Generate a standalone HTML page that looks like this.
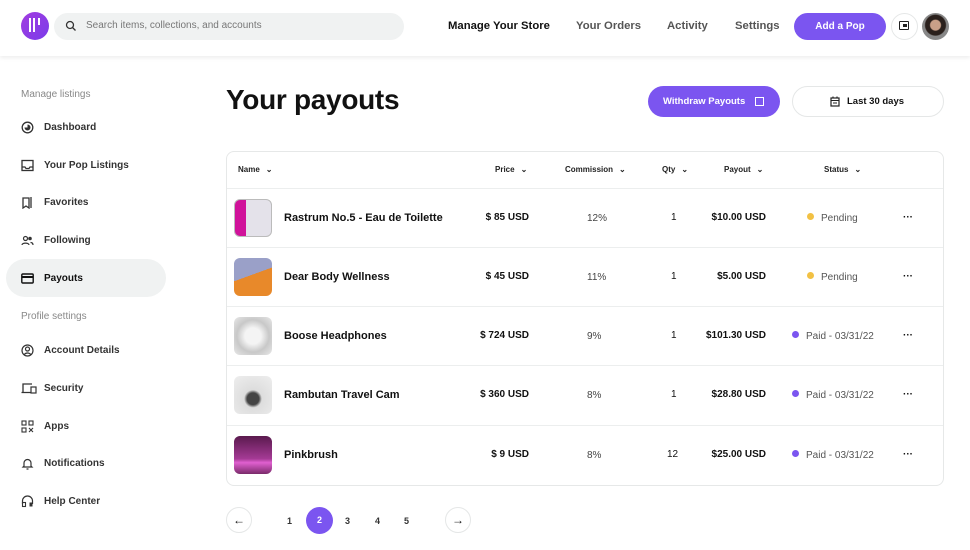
<!DOCTYPE html>
<html><head><style>
*{box-sizing:border-box;margin:0;padding:0}
body{width:970px;height:550px;overflow:hidden;background:#fff;font-family:"Liberation Sans",sans-serif;color:#111;position:relative}
.a{position:absolute}
.hdr{left:0;top:0;width:970px;height:56px;background:#fff;box-shadow:0 2px 4px rgba(0,0,0,.07)}
.nav{top:20px;font-size:11.3px;font-weight:bold;color:#555}
.side{left:44px;font-size:10px;font-weight:bold;color:#333}
.ic{left:21px;width:13px;height:13px}
.lbl{left:21px;font-size:10px;color:#888}
.th{top:165px;font-size:8px;font-weight:bold;color:#222}
.th i{font-style:normal;margin-left:6px;font-size:8px}
.row{left:227px;width:716px;height:59px;border-top:1px solid #eceeee}
.thumb{left:7px;top:10px;width:38px;height:38px;border-radius:6px}
.nm{left:57px;top:23px;font-size:11px;font-weight:bold}
.pr{right:414px;top:23px;font-size:10px;font-weight:bold}
.cm{left:360px;top:24px;font-size:10px;color:#444}
.q{left:444px;top:23px;font-size:10px}
.po{right:177px;top:23px;font-size:10px;font-weight:bold}
.st{left:580px;top:24px;font-size:10px;color:#555}
.st b{display:inline-block;width:7px;height:7px;border-radius:50%;margin-right:7px;vertical-align:1px}
.dt{left:676px;top:23px;font-size:10px;font-weight:bold}
.pg{top:516px;font-size:9px;font-weight:bold;color:#333}
.cir{width:26px;height:26px;border:1px solid #e5e7e7;border-radius:50%;text-align:center;line-height:24px;font-size:12px;top:507px}
</style></head><body>
<div class="a hdr"></div>
<div class="a" style="left:21px;top:12px;width:28px;height:28px;border-radius:50%;background:linear-gradient(135deg,#a23de0,#7a3bea)"></div>
<div class="a" style="left:29px;top:18px;width:2px;height:14px;background:#fff"></div>
<div class="a" style="left:33px;top:18px;width:2px;height:14px;background:#fff"></div>
<div class="a" style="left:38px;top:18px;width:2px;height:7px;background:#fff"></div>
<div class="a" style="left:54px;top:13px;width:350px;height:27px;border-radius:14px;background:#f0f2f2"></div>
<svg class="a" style="left:65px;top:20px" width="12" height="12" viewBox="0 0 12 12"><circle cx="5" cy="5" r="3.5" fill="none" stroke="#333" stroke-width="1.3"/><path d="M7.5 7.5l3 3" stroke="#333" stroke-width="1.3"/></svg>
<div class="a" style="left:86px;top:20px;font-size:10px;color:#777;line-height:12px">Search items, collections, and accounts</div>
<div class="a nav" style="left:448px;color:#111">Manage Your Store</div>
<div class="a nav" style="left:576px">Your Orders</div>
<div class="a nav" style="left:667px">Activity</div>
<div class="a nav" style="left:735px">Settings</div>
<div class="a" style="left:794px;top:13px;width:92px;height:27px;border-radius:14px;background:#7b55f0;color:#fff;font-size:10px;font-weight:bold;text-align:center;line-height:28px">Add a Pop</div>
<div class="a" style="left:891px;top:13px;width:27px;height:27px;border-radius:50%;border:1px solid #e5e7e7"></div>
<div class="a" style="left:899px;top:21px;width:10px;height:9px;border:1.5px solid #222;border-radius:1px"></div>
<div class="a" style="left:903px;top:24px;width:4px;height:3px;background:#222"></div>
<div class="a" style="left:922px;top:13px;width:27px;height:27px;border-radius:50%;background:radial-gradient(circle at 50% 45%,#c9a088 0 5px,#2a201c 6px 10px,#888 11px)"></div>

<div class="a lbl" style="top:89px">Manage listings</div>
<div class="a" style="left:6px;top:259px;width:160px;height:38px;border-radius:19px;background:#f0f2f2"></div>
<svg class="a ic" style="top:121px" viewBox="0 0 13 13"><circle cx="6.5" cy="6.5" r="5.3" fill="none" stroke="#333" stroke-width="1.3"/><path d="M6.5 3.5a3 3 0 1 1-3 3h3z" fill="#333"/></svg>
<div class="a side" style="top:122px">Dashboard</div>
<svg class="a ic" style="top:159px" viewBox="0 0 13 13"><rect x="1" y="1.5" width="11" height="10" fill="none" stroke="#333" stroke-width="1.3"/><path d="M1 8h3l1 1.5h3L9 8h3" fill="none" stroke="#333" stroke-width="1.2"/></svg>
<div class="a side" style="top:160px">Your Pop Listings</div>
<svg class="a ic" style="top:196px" viewBox="0 0 13 13"><path d="M2 2h6v10L5 10 2 12z M10 1v11" fill="none" stroke="#333" stroke-width="1.3"/></svg>
<div class="a side" style="top:197px">Favorites</div>
<svg class="a ic" style="top:234px" viewBox="0 0 13 13"><circle cx="4.5" cy="4.5" r="2" fill="none" stroke="#333" stroke-width="1.2"/><circle cx="9" cy="4.5" r="1.8" fill="#333"/><path d="M1 11c0-2.5 7-2.5 7 0M9.5 8.5c1.5 0 2.5 1 2.5 2.5" fill="none" stroke="#333" stroke-width="1.2"/></svg>
<div class="a side" style="top:235px">Following</div>
<svg class="a ic" style="top:272px" viewBox="0 0 13 13"><rect x="0.8" y="2" width="11.4" height="9" rx="1" fill="none" stroke="#111" stroke-width="1.4"/><rect x="1" y="4" width="11" height="2" fill="#111"/></svg>
<div class="a side" style="top:273px;color:#111">Payouts</div>
<div class="a lbl" style="top:311px">Profile settings</div>
<svg class="a ic" style="top:344px" viewBox="0 0 13 13"><circle cx="6.5" cy="6.5" r="5.5" fill="none" stroke="#333" stroke-width="1.2"/><circle cx="6.5" cy="5" r="2" fill="none" stroke="#333" stroke-width="1.2"/><path d="M3.3 10.5c1.5-2 5-2 6.4 0" fill="none" stroke="#333" stroke-width="1.2"/></svg>
<div class="a side" style="top:345px">Account Details</div>
<svg class="a ic" style="top:382px;width:16px" viewBox="0 0 16 13"><path d="M2 10V2h9M0.5 10.5h9" fill="none" stroke="#333" stroke-width="1.3"/><rect x="10" y="5" width="5" height="6" fill="none" stroke="#333" stroke-width="1.2"/></svg>
<div class="a side" style="top:383px">Security</div>
<svg class="a ic" style="top:420px" viewBox="0 0 13 13"><g fill="none" stroke="#333" stroke-width="1.1"><rect x="1" y="1" width="4" height="4"/><rect x="8" y="1" width="4" height="4"/><rect x="1" y="8" width="4" height="4"/><path d="M8 8l4 4M12 8l-4 4"/></g></svg>
<div class="a side" style="top:421px">Apps</div>
<svg class="a ic" style="top:457px" viewBox="0 0 13 13"><path d="M3 9V6a3.5 3.5 0 0 1 7 0v3l1 1H2zM5.5 12h2" fill="none" stroke="#333" stroke-width="1.2"/></svg>
<div class="a side" style="top:458px">Notifications</div>
<svg class="a ic" style="top:495px" viewBox="0 0 13 13"><path d="M1.5 9V6a5 5 0 0 1 10 0v3" fill="none" stroke="#333" stroke-width="1.2"/><rect x="1.5" y="7.5" width="3" height="4" fill="none" stroke="#333" stroke-width="1.1"/><rect x="8.5" y="7.5" width="3" height="4" fill="#333"/></svg>
<div class="a side" style="top:496px">Help Center</div>

<div class="a" style="left:226px;top:84px;font-size:28px;font-weight:bold;letter-spacing:-0.3px">Your payouts</div>
<div class="a" style="left:648px;top:86px;width:132px;height:31px;border-radius:16px;background:#7b55f0;color:#fff;font-size:9.5px;font-weight:bold;line-height:32px;padding-left:15px">Withdraw Payouts</div>
<div class="a" style="left:755px;top:97px;width:9px;height:9px;border:1.3px solid #fff"></div>
<div class="a" style="left:792px;top:86px;width:152px;height:31px;border-radius:16px;border:1px solid #e5e7e7;font-size:9.5px;font-weight:bold;line-height:30px;padding-left:54px">Last 30 days</div>
<svg class="a" style="left:830px;top:96px" width="10" height="11" viewBox="0 0 10 11"><rect x="1" y="2" width="8" height="8" fill="none" stroke="#222" stroke-width="1.2"/><path d="M1 4.5h8M3 0.5v2M7 0.5v2M3 7h4" stroke="#222" stroke-width="1.1"/></svg>

<div class="a" style="left:226px;top:151px;width:718px;height:335px;border:1px solid #e6e8e8;border-radius:8px"></div>
<div class="a th" style="left:238px">Name<i>⌄</i></div>
<div class="a th" style="left:495px">Price<i>⌄</i></div>
<div class="a th" style="left:565px">Commission<i>⌄</i></div>
<div class="a th" style="left:662px">Qty<i>⌄</i></div>
<div class="a th" style="left:724px">Payout<i>⌄</i></div>
<div class="a th" style="left:824px">Status<i>⌄</i></div>

<div class="a row" style="top:188px">
<div class="a thumb" style="background:linear-gradient(90deg,#d0129a 0 30%,#e4e2ea 30%);border:1px solid #bbb"></div>
<div class="a nm">Rastrum No.5 - Eau de Toilette</div><div class="a pr">$ 85 USD</div><div class="a cm">12%</div><div class="a q">1</div><div class="a po">$10.00 USD</div><div class="a st"><b style="background:#f2c144"></b>Pending</div><div class="a dt">···</div></div>
<div class="a row" style="top:247px">
<div class="a thumb" style="background:linear-gradient(160deg,#9aa0c8 0 45%,#e8892a 45%)"></div>
<div class="a nm">Dear Body Wellness</div><div class="a pr">$ 45 USD</div><div class="a cm">11%</div><div class="a q">1</div><div class="a po">$5.00 USD</div><div class="a st"><b style="background:#f2c144"></b>Pending</div><div class="a dt">···</div></div>
<div class="a row" style="top:306px">
<div class="a thumb" style="background:radial-gradient(circle,#f4f4f4 30%,#c8c8c8 60%,#e8e8e8)"></div>
<div class="a nm">Boose Headphones</div><div class="a pr">$ 724 USD</div><div class="a cm">9%</div><div class="a q">1</div><div class="a po">$101.30 USD</div><div class="a st" style="left:565px"><b style="background:#7b55f0"></b>Paid - 03/31/22</div><div class="a dt">···</div></div>
<div class="a row" style="top:365px">
<div class="a thumb" style="background:radial-gradient(circle at 50% 60%,#444 0 20%,#ddd 30%,#eee)"></div>
<div class="a nm">Rambutan Travel Cam</div><div class="a pr">$ 360 USD</div><div class="a cm">8%</div><div class="a q">1</div><div class="a po">$28.80 USD</div><div class="a st" style="left:565px"><b style="background:#7b55f0"></b>Paid - 03/31/22</div><div class="a dt">···</div></div>
<div class="a row" style="top:425px">
<div class="a thumb" style="background:linear-gradient(180deg,#5a1a4e,#a53a95 60%,#e060d0 70%,#7a2a6a)"></div>
<div class="a nm">Pinkbrush</div><div class="a pr">$ 9 USD</div><div class="a cm">8%</div><div class="a q" style="left:440px">12</div><div class="a po">$25.00 USD</div><div class="a st" style="left:565px"><b style="background:#7b55f0"></b>Paid - 03/31/22</div><div class="a dt">···</div></div>

<div class="a cir" style="left:226px">←</div>
<div class="a pg" style="left:287px">1</div>
<div class="a" style="left:306px;top:507px;width:27px;height:27px;border-radius:50%;background:#7b55f0;color:#fff;font-size:9px;font-weight:bold;text-align:center;line-height:27px">2</div>
<div class="a pg" style="left:345px">3</div>
<div class="a pg" style="left:375px">4</div>
<div class="a pg" style="left:404px">5</div>
<div class="a cir" style="left:445px">→</div>
</body></html>
